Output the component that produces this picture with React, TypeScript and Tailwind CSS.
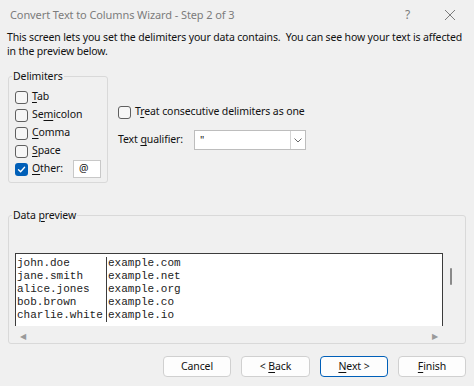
import React from "react";

const rows = [
  ["john.doe", "example.com"],
  ["jane.smith", "example.net"],
  ["alice.jones", "example.org"],
  ["bob.brown", "example.co"],
  ["charlie.white", "example.io"],
];

function Box({ checked = false }: { checked?: boolean }) {
  if (checked) {
    return (
      <span className="flex h-[13px] w-[13px] shrink-0 items-center justify-center rounded-[3px] bg-[#005fb8]">
        <svg width="9" height="9" viewBox="0 0 9 9" fill="none">
          <path d="M1.5 4.8 L3.6 6.8 L7.6 2.2" stroke="#fff" strokeWidth="1.3" strokeLinecap="round" strokeLinejoin="round" />
        </svg>
      </span>
    );
  }
  return <span className="h-[13px] w-[13px] shrink-0 rounded-[3px] border border-[#5f5f5f] bg-[#f6f6f6]" />;
}

function Check({ pre, u, post, checked }: { pre?: string; u: string; post: string; checked?: boolean }) {
  return (
    <div className="flex h-[18px] items-center gap-[4px]">
      <Box checked={checked} />
      <span>
        {pre}
        <span className="underline underline-offset-2">{u}</span>
        {post}
      </span>
    </div>
  );
}

export default function App() {
  return (
    <div
      className="relative h-[386px] w-[474px] overflow-hidden bg-[#f0f0f0] text-[10.5px] tracking-[-0.1px] text-[#111]"
      style={{ fontFamily: '"Noto Sans", "Liberation Sans", sans-serif' }}
    >
      {/* title bar */}
      <div className="flex h-[30px] items-center pl-[10px] pr-[18px] text-[11px] text-[#7c7c7c]">
        <span>Convert Text to Columns Wizard - Step 2 of 3</span>
        <span className="ml-auto mr-[34px] text-[12px]">?</span>
        <svg width="12" height="12" viewBox="0 0 12 12">
          <path d="M1 1 L11 11 M11 1 L1 11" stroke="#7c7c7c" strokeWidth="1" />
        </svg>
      </div>

      <p className="whitespace-nowrap px-[7px] leading-[14px] tracking-[-0.15px]">
        This screen lets you set the delimiters your data contains.&nbsp; You can see how your text is affected
        <br />
        in the preview below.
      </p>

      <div className="mt-[10px] flex pl-[8px]">
        <fieldset className="h-[115px] w-[100px] shrink-0 rounded-[3px] border border-[#d9d9d9] pl-[6px]">
          <legend className="ml-[-3px] px-[1px] leading-[16px]">Delimiters</legend>
          <div className="mt-[4px]">
            <Check u="T" post="ab" />
            <Check pre="Se" u="m" post="icolon" />
            <Check u="C" post="omma" />
            <Check u="S" post="pace" />
            <div className="flex h-[18px] items-center gap-[4px]">
              <Box checked />
              <span>
                <span className="underline underline-offset-2">O</span>ther:
              </span>
              <div className="ml-[6px] flex h-[18px] w-[28px] items-center border border-[#c8c8c8] bg-white pl-[5px]">@</div>
            </div>
          </div>
        </fieldset>

        <div className="ml-[10px] pt-[35px]">
          <Check u="r" pre="T" post="eat consecutive delimiters as one" />
          <div className="mt-[9px] flex items-center">
            <span>
              Text <span className="underline underline-offset-2">q</span>ualifier:
            </span>
            <div className="ml-[11px] flex h-[20px] w-[112px] items-center border border-[#bdbdbd] bg-white">
              <span className="flex-1 pl-[5px] leading-none">"</span>
              <div className="flex h-full w-[15px] items-center justify-center border-l border-[#d4d4d4]">
                <svg width="8" height="5" viewBox="0 0 8 5">
                  <path d="M0.5 0.5 L4 4 L7.5 0.5" stroke="#6a6a6a" fill="none" strokeWidth="1" />
                </svg>
              </div>
            </div>
          </div>
        </div>
      </div>

      <fieldset className="ml-[8px] mt-[24px] h-[137px] w-[458px] rounded-[3px] border border-[#d9d9d9] pl-[6px]">
        <legend className="ml-[-3px] px-[1px] leading-[16px]">
          Data <span className="underline underline-offset-2">p</span>review
        </legend>
        <div className="mt-[30px] flex">
          <div
            className="h-[73px] w-[428px] border-x border-t border-[#3c3c3c] bg-white pt-[3px] text-[11px] leading-[13px] tracking-normal text-[#222]"
            style={{ fontFamily: '"Liberation Mono", "Courier New", monospace' }}
          >
            {rows.map(([a, b]) => (
              <div key={a} className="flex">
                <span className="w-[91px] border-r border-[#3c3c3c] pl-[1px]">{a}</span>
                <span className="pl-[1px]">{b}</span>
              </div>
            ))}
          </div>
          <div className="ml-[7px] mt-[15px] h-[17px] w-[2px] rounded-full bg-[#8a8a8a]" />
        </div>
        <div className="flex w-[428px] items-center justify-between px-[5px] pt-[4px] text-[8px] text-[#9a9a9a]">
          <span>◀</span>
          <span>▶</span>
        </div>
      </fieldset>

      <div className="mt-[12px] flex justify-end gap-[10px] pr-[8px]">
        <button className="h-[21px] w-[68px] rounded-[4px] border border-[#d0d0d0] bg-[#fdfdfd]">Cancel</button>
        <button className="h-[21px] w-[69px] rounded-[4px] border border-[#d0d0d0] bg-[#fdfdfd]">
          &lt; <span className="underline underline-offset-2">B</span>ack
        </button>
        <button className="h-[21px] w-[68px] rounded-[4px] border border-[#005fb8] bg-[#fdfdfd]">
          <span className="underline underline-offset-2">N</span>ext &gt;
        </button>
        <button className="h-[21px] w-[68px] rounded-[4px] border border-[#d0d0d0] bg-[#fdfdfd]">
          <span className="underline underline-offset-2">F</span>inish
        </button>
      </div>
    </div>
  );
}
